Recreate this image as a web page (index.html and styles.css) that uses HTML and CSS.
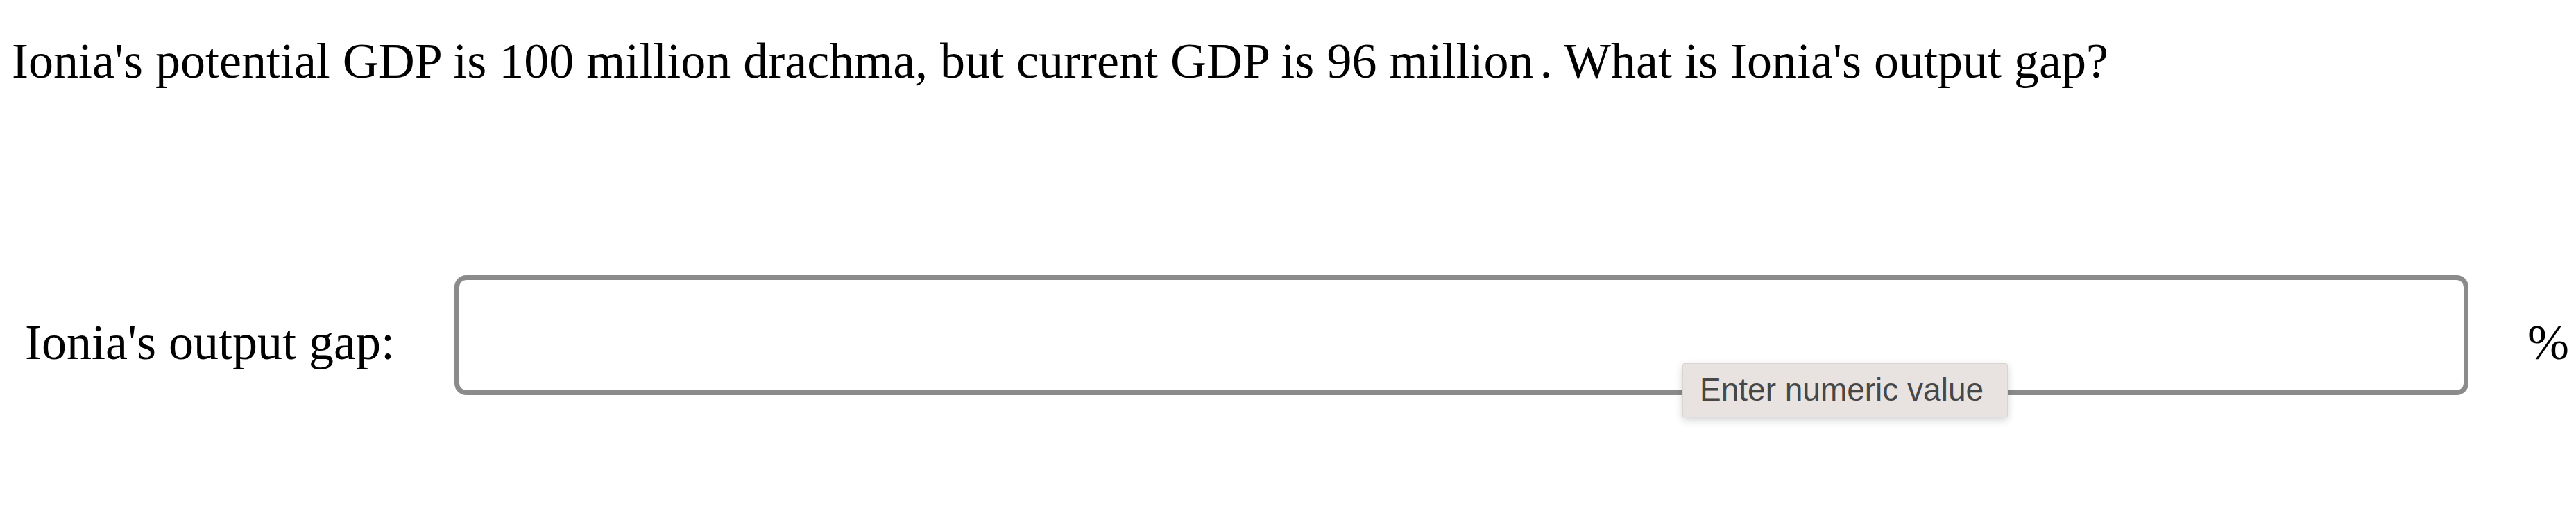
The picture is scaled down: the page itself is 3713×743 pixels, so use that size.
FILE: index.html
```html
<!DOCTYPE html>
<html lang="en">
<head>
<meta charset="utf-8">
<title>Output gap</title>
<link rel="stylesheet" href="styles.css">
</head>
<body>
<main class="page">
  <p class="question">Ionia's potential GDP is 100 million drachma, but current GDP is 96 <span class="num">million</span>. What is Ionia's output gap?</p>
  <div class="row">
    <label class="label" for="gap">Ionia's output gap:</label>
    <div class="field">
      <input class="input" id="gap" type="text" aria-label="Ionia's output gap">
      <div class="tooltip">Enter numeric value</div>
    </div>
    <span class="unit">%</span>
  </div>
</main>
</body>
</html>
```
FILE: styles.css
```css
html, body {
  margin: 0;
  padding: 0;
  background: #ffffff;
}
body {
  font-family: "Liberation Serif", "Times New Roman", serif;
  font-size: 72px;
  line-height: 80px;
  color: #000000;
}
.page {
  display: block;
  min-height: 743px;
  padding-top: 48px;
  box-sizing: border-box;
}
.question {
  margin: 0;
  padding-left: 17px;
  white-space: nowrap;
}
.num {
  margin-right: 9px;
}
.row {
  display: flex;
  align-items: flex-start;
  margin-top: 269px;
  padding-left: 36px;
  padding-bottom: 60px;
}
.label {
  margin-top: 57px;
  width: 533px;
  margin-right: 86px;
  white-space: nowrap;
}
.field {
  position: relative;
  width: 2903px;
  height: 173px;
  flex: none;
}
.input {
  box-sizing: border-box;
  display: block;
  width: 100%;
  height: 100%;
  margin: 0;
  padding: 0 20px;
  border: 7px solid #8b8b8b;
  border-radius: 17px;
  background: #ffffff;
  outline: none;
  font-family: "Liberation Serif", serif;
  font-size: 72px;
}
.tooltip {
  position: absolute;
  left: 1770px;
  top: 127px;
  z-index: 2;
  box-sizing: border-box;
  width: 469px;
  height: 78px;
  padding-left: 24px;
  border: 1px solid #d9d4d2;
  border-radius: 3px;
  background: #e8e3e1;
  box-shadow: 0 4px 12px rgba(0, 0, 0, 0.18);
  font-family: "Liberation Sans", Arial, sans-serif;
  font-size: 46px;
  line-height: 74px;
  color: #474747;
  white-space: nowrap;
}
.unit {
  margin-top: 57px;
  margin-left: 85px;
}
```
